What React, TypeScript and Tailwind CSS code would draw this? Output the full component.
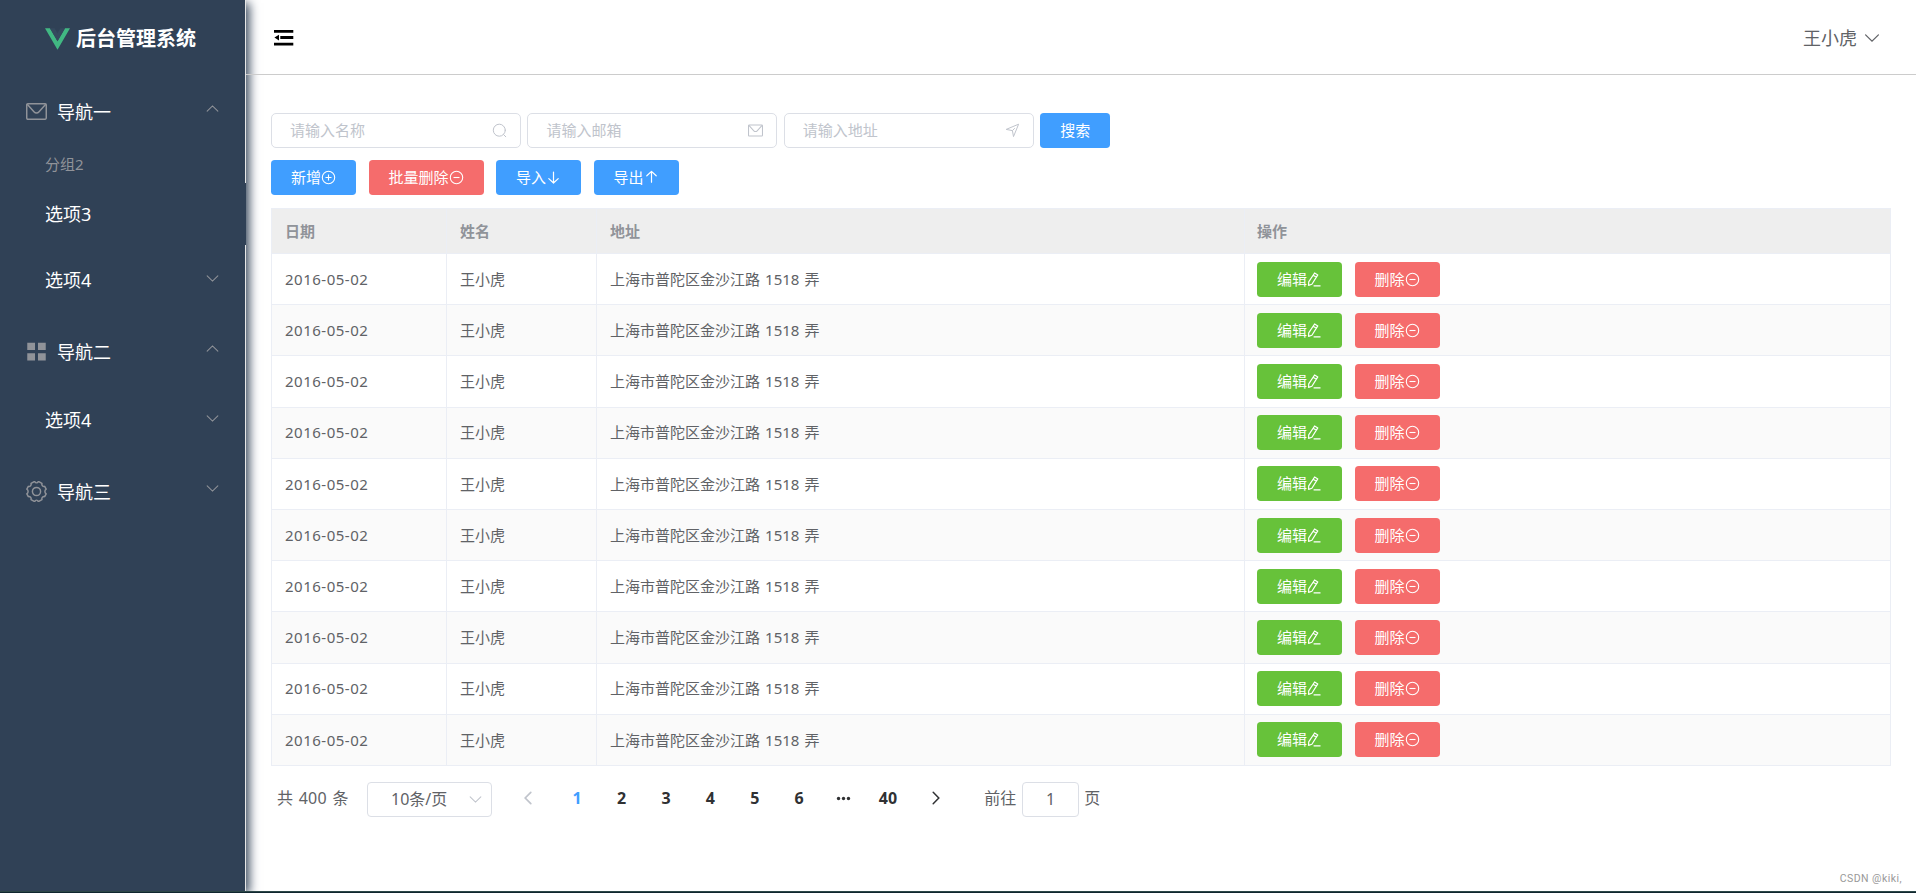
import React, { useState } from 'react';

interface IconProps {
  className?: string;
}

interface RowData {
  date: string;
  name: string;
  address: string;
}

const tableData: RowData[] = Array.from({ length: 10 }, () => ({
  date: '2016-05-02',
  name: '王小虎',
  address: '上海市普陀区金沙江路 1518 弄',
}));

const VueLogo: React.FC<IconProps> = ({ className }) => (
  <svg viewBox="0 0 256 221" className={className}>
    <path fill="#41b883" d="M0 0l128 220.8L256 0h-51.2L128 132.5 50.6 0z" />
    <path fill="#35495e" d="M50.6 0L128 133.1 204.8 0h-47.4L128 51.2 97.9 0z" />
  </svg>
);

const FoldIcon: React.FC<IconProps> = ({ className }) => (
  <svg viewBox="0 0 20 16" className={className} fill="currentColor">
    <path d="M0 0h19.3v2.7H0zM6.3 6h13v3h-13zM0 12.8h19.3v2.6H0zM5 4.8v5.6L.4 7.6z" />
  </svg>
);

const MessageIcon: React.FC<IconProps> = ({ className }) => (
  <svg viewBox="0 0 20 20" className={className} fill="none" stroke="currentColor" strokeWidth="1.4">
    <rect x=".7" y="2.7" width="18.6" height="14.6" rx="1" />
    <path d="M1.2 3.2l6.6 7.2a3 3 0 0 0 4.4 0l6.6-7.2" />
  </svg>
);

const MenuIcon: React.FC<IconProps> = ({ className }) => (
  <svg viewBox="0 0 20 20" className={className} fill="currentColor">
    <path d="M1.2 1.6h7.4v7H1.2zM11.4 1.6h7.4v7h-7.4zM1.2 11.6h7.4v7H1.2zM11.4 11.6h7.4v7h-7.4z" />
  </svg>
);

const SettingIcon: React.FC<IconProps> = ({ className }) => (
  <svg viewBox="0 0 20 20" className={className} fill="none" stroke="currentColor" strokeWidth="1.4" strokeLinejoin="round">
    <circle cx="10" cy="10" r="3.9" />
    <path d="M7.4 .8h1.1c.4 1.3 2.6 1.3 3 0h1.1l2.6 1.5c-.5 1.6.8 3.2 2.6 2.8l1.4 2.6c-1.6 1.2-1.6 3.4 0 4.6l-1.4 2.6c-1.8-.4-3.1 1.2-2.6 2.8l-2.6 1.5h-1.1c-.4-1.3-2.6-1.3-3 0H7.4l-2.6-1.5c.5-1.6-.8-3.2-2.6-2.8L.8 12.3c1.6-1.2 1.6-3.4 0-4.6l1.4-2.6c1.8.4 3.1-1.2 2.6-2.8z" />
  </svg>
);

const ArrowIcon: React.FC<IconProps> = ({ className }) => (
  <svg viewBox="0 0 16 16" className={className} fill="none" stroke="currentColor" strokeWidth="1.1" strokeLinecap="round">
    <path d="M2.3 5.2L8 10.8l5.7-5.6" />
  </svg>
);

const SearchIcon: React.FC<IconProps> = ({ className }) => (
  <svg viewBox="0 0 15 15" className={className} fill="none" stroke="currentColor" strokeLinecap="round">
    <circle cx="7.3" cy="7.2" r="6" />
    <path d="M11.6 11.6l2.2 2.2" />
  </svg>
);

const PositionIcon: React.FC<IconProps> = ({ className }) => (
  <svg viewBox="0 0 15 15" className={className} fill="none" stroke="currentColor" strokeLinejoin="round">
    <path d="M13.6 1.2L1.2 6.4l6.2 1.2 1.1 6zM7.4 7.6l2.4-2.4" />
  </svg>
);

const CirclePlusIcon: React.FC<IconProps> = ({ className }) => (
  <svg viewBox="0 0 15 15" className={className} fill="none" stroke="currentColor" strokeWidth="1.1">
    <circle cx="7.5" cy="7.5" r="6.2" />
    <path d="M4.5 7.5h6M7.5 4.5v6" />
  </svg>
);

const RemoveIcon: React.FC<IconProps> = ({ className }) => (
  <svg viewBox="0 0 15 15" className={className} fill="none" stroke="currentColor" strokeWidth="1.1">
    <circle cx="7.5" cy="7.5" r="6.2" />
    <path d="M4.5 7.5h6" />
  </svg>
);

const BottomIcon: React.FC<IconProps> = ({ className }) => (
  <svg viewBox="0 0 15 15" className={className} fill="none" stroke="currentColor" strokeWidth="1.2" strokeLinecap="round" strokeLinejoin="round">
    <path d="M7.5 2v11M2.8 8.6L7.5 13l4.7-4.4" />
  </svg>
);

const TopIcon: React.FC<IconProps> = ({ className }) => (
  <svg viewBox="0 0 15 15" className={className} fill="none" stroke="currentColor" strokeWidth="1.2" strokeLinecap="round" strokeLinejoin="round">
    <path d="M7.5 12.2V1.4M2.8 5.8l4.7-4.4 4.7 4.4" />
  </svg>
);

const EditIcon: React.FC<IconProps> = ({ className }) => (
  <svg viewBox="0 0 15 15" className={className} fill="none" stroke="currentColor" strokeWidth="1.2" strokeLinejoin="round">
    <path d="M7.6 1l3.2 1.9-5.9 9.3-3.3 1.2.1-3.5zM6.2 3.3l3.2 1.9M6.6 13.8h6.9" />
  </svg>
);

const MoreIcon: React.FC<IconProps> = ({ className }) => (
  <svg viewBox="0 0 16 16" className={className} fill="currentColor">
    <circle cx="2.7" cy="8" r="1.8" />
    <circle cx="8" cy="8" r="1.8" />
    <circle cx="13.3" cy="8" r="1.8" />
  </svg>
);

interface ButtonProps {
  color: 'primary' | 'danger' | 'success';
  children: React.ReactNode;
}

const buttonColors = {
  primary: 'bg-[#409eff]',
  danger: 'bg-[#f56c6c]',
  success: 'bg-[#67c23a]',
};

const Button: React.FC<ButtonProps> = ({ color, children }) => (
  <button className={`flex h-[35px] shrink-0 items-center rounded-[3.75px] px-5 text-[15px] leading-none text-white ${buttonColors[color]}`}>
    {children}
  </button>
);

interface SearchInputProps {
  placeholder: string;
  icon: React.ReactNode;
}

const SearchInput: React.FC<SearchInputProps> = ({ placeholder, icon }) => (
  <div className="flex h-[35px] w-[250px] items-center rounded-[5px] border border-[#dcdfe6] bg-white pr-[13px] pl-[18px] text-[#c0c4cc]">
    <input placeholder={placeholder} className="min-w-0 flex-1 text-[15px] text-[#606266] outline-none placeholder:text-[#c0c4cc]" />
    {icon}
  </div>
);

interface MenuTitleProps {
  label: string;
  icon?: React.ReactNode;
  open?: boolean;
}

const MenuTitle: React.FC<MenuTitleProps> = ({ label, icon, open }) => (
  <div className={`flex h-[70px] items-center pr-[25px] ${icon ? 'pl-[26px]' : 'pl-[45px]'}`}>
    {icon && <span className="mr-[10px] pt-[2px] text-[#909399]">{icon}</span>}
    <span className={`flex-1 text-lg text-white ${icon ? 'pt-1' : ''}`}>{label}</span>
    <ArrowIcon className={`mb-[3px] size-[15px] text-[#909399] ${open ? 'rotate-180' : ''}`} />
  </div>
);

const Sidebar: React.FC = () => (
  <aside className="relative z-10 flex w-[246px] shrink-0 flex-col bg-[#304156] shadow-[3px_3px_10px_#304156]">
    <div className="flex h-[75px] items-center border-r border-[#e6e6e6] pt-[2px] pl-[45px]">
      <VueLogo className="mr-[6px] h-[22px] w-[25px]" />
      <h1 className="text-xl font-bold text-white">后台管理系统</h1>
    </div>
    <div className="border-r border-[#e6e6e6]">
      <MenuTitle label="导航一" icon={<MessageIcon className="size-[21px]" />} open />
      <div className="flex h-[38px] items-center pl-[45px] text-[15px] text-[#909399]">分组2</div>
    </div>
    <div className="flex h-[62px] items-center pl-[45px] text-lg text-white">选项3</div>
    <nav className="flex-1 border-r border-[#e6e6e6]">
      <MenuTitle label="选项4" />
      <MenuTitle label="导航二" icon={<MenuIcon className="size-[21px]" />} open />
      <MenuTitle label="选项4" />
      <MenuTitle label="导航三" icon={<SettingIcon className="size-[21px]" />} />
    </nav>
  </aside>
);

const cell = 'flex items-center border-r border-[#ebeef5]';
const columns = 'grid grid-cols-[175px_150px_648px_1fr]';

const DataTable: React.FC = () => (
  <div className="mt-[13px] border-t border-l border-[#ebeef5] text-[15px] text-[#606266]">
    <div className={`${columns} h-[45px] border-b border-[#ebeef5] bg-[#eee] font-bold text-[#909399]`}>
      <div className={`${cell} pl-[13px]`}>日期</div>
      <div className={`${cell} pl-[13px]`}>姓名</div>
      <div className={`${cell} pl-[13px]`}>地址</div>
      <div className={`${cell} pl-3`}>操作</div>
    </div>
    {tableData.map((row, index) => (
      <div key={index} className={`${columns} h-[51.2px] border-b border-[#ebeef5] ${index % 2 ? 'bg-[#fafafa]' : 'bg-white'}`}>
        <div className={`${cell} pl-[13px] tracking-[0.5px]`}>{row.date}</div>
        <div className={`${cell} pl-[13px]`}>{row.name}</div>
        <div className={`${cell} pl-[13px] [word-spacing:1.2px]`}>{row.address}</div>
        <div className={`${cell} gap-[12.5px] pl-3`}>
          <Button color="success">编辑<EditIcon className="size-[15px]" /></Button>
          <Button color="danger">删除<RemoveIcon className="size-[15px]" /></Button>
        </div>
      </div>
    ))}
  </div>
);

const Pagination: React.FC = () => {
  const [current, setCurrent] = useState('1');
  const pages = ['1', '2', '3', '4', '5', '6', 'more', '40'];

  return (
    <div className="mt-4 flex h-[35px] items-center pl-[6px] text-base text-[#606266]">
      <span className="w-[90px] pb-[2px] tracking-[0.2px] [word-spacing:1.2px]">共 400 条</span>
      <div className="flex h-[35px] w-[125px] items-center rounded-[4px] border border-[#dcdfe6] pr-[8px] pl-[23px]">
        <span className="flex-1 pb-px">10条/页</span>
        <ArrowIcon className="size-[15px] text-[#c0c4cc]" />
      </div>
      <ArrowIcon className="mb-[2px] ml-[28px] size-4 rotate-90 stroke-[1.7] text-[#c0c4cc]" />
      <div className="ml-[19px] flex pb-[2px] font-bold text-[#303133]">
        {pages.map((page) => (
          <button
            key={page}
            onClick={() => setCurrent(page)}
            className={`flex w-[44.4px] items-center justify-center ${page === current ? 'text-[#409eff]' : ''}`}
          >
            {page === 'more' ? <MoreIcon className="size-[15px]" /> : page}
          </button>
        ))}
      </div>
      <ArrowIcon className="mb-[2px] ml-[18px] size-4 -rotate-90 stroke-[1.5] text-[#303133]" />
      <span className="ml-10 w-[38px] pb-[2px]">前往</span>
      <input defaultValue="1" className="h-[35px] w-[57px] rounded-[4px] border border-[#dcdfe6] text-center outline-none" />
      <span className="ml-[5px] pb-[2px]">页</span>
    </div>
  );
};

const App: React.FC = () => (
  <div className="flex h-[893px] w-[1916px] flex-col overflow-hidden bg-white font-['Noto_Sans','Noto_Sans_CJK_SC',sans-serif]">
    <div className="flex min-h-0 flex-1 overflow-hidden">
      <Sidebar />
      <div className="flex min-w-0 flex-1 flex-col">
        <header className="relative z-20 flex h-[75px] shrink-0 items-center justify-between border-b border-[#ccc] pt-[2px] pr-[35px] pl-7">
          <FoldIcon className="h-4 w-5 text-black" />
          <div className="flex items-center text-lg text-[#606266]">
            王小虎
            <ArrowIcon className="ml-[6px] size-[18px]" />
          </div>
        </header>
        <main className="flex-1 pt-[38px] pr-[25px] pl-[25px]">
          <div className="flex gap-[6.4px]">
            <SearchInput placeholder="请输入名称" icon={<SearchIcon className="size-[15px]" />} />
            <SearchInput placeholder="请输入邮箱" icon={<MessageIcon className="size-[15px]" />} />
            <SearchInput placeholder="请输入地址" icon={<PositionIcon className="size-[15px]" />} />
            <Button color="primary">搜索</Button>
          </div>
          <div className="mt-3 flex gap-[12.5px]">
            <Button color="primary">新增<CirclePlusIcon className="size-[15px]" /></Button>
            <Button color="danger">批量删除<RemoveIcon className="size-[15px]" /></Button>
            <Button color="primary">导入<BottomIcon className="size-[15px]" /></Button>
            <Button color="primary">导出<TopIcon className="size-[15px]" /></Button>
          </div>
          <DataTable />
          <Pagination />
        </main>
        <footer className="flex justify-end pr-[14px] pb-1 font-['Roboto',sans-serif] text-[10.5px] tracking-[0.45px] text-[#999]">CSDN @kiki,</footer>
      </div>
    </div>
    <div className="h-[2px] shrink-0 border-t border-[#2c4747] bg-[#10262f]" />
  </div>
);

export default App;
